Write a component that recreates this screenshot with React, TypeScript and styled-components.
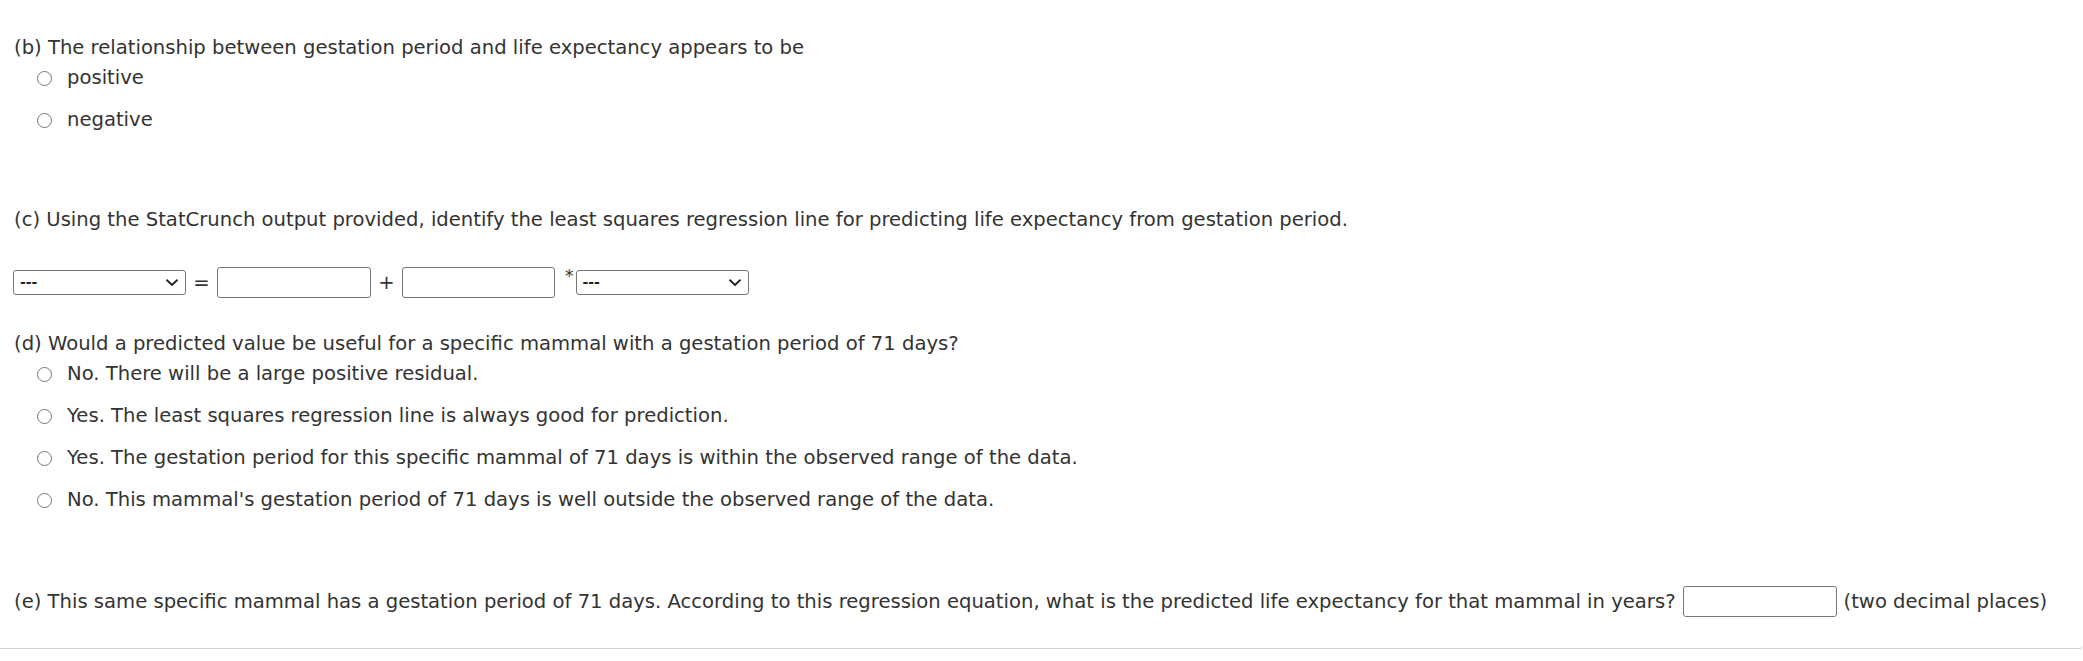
import styled, { createGlobalStyle } from "styled-components";

const GlobalStyle = createGlobalStyle`
  html, body {
    margin: 0;
    padding: 0;
    background: #fff;
  }
  body {
    font-family: "DejaVu Sans", Verdana, sans-serif;
    font-size: 19.6px;
    color: #333;
  }
`;

const Page = styled.div`
  padding: 37px 0 0 14px;
  border-bottom: 1px solid #d4d4d4;
  border-bottom-right-radius: 4px;
  padding-bottom: 31px;
`;

const Section = styled.div<{ $gap?: number }>`
  margin-top: ${(p) => p.$gap ?? 0}px;
`;

const Question = styled.div`
  line-height: 22px;
  height: 22px;
  white-space: nowrap;
`;

const Options = styled.div`
  display: flex;
  flex-direction: column;
  gap: 20px;
  margin-top: 8px;
  padding-left: 23px;
`;

const Option = styled.label`
  display: flex;
  align-items: center;
  gap: 15px;
  height: 22px;
  line-height: 22px;
  white-space: nowrap;
`;

const Radio = styled.span`
  width: 13px;
  height: 13px;
  border: 1px solid #767676;
  border-radius: 50%;
  flex: none;
  margin-top: 1px;
`;

const EqRow = styled.div`
  display: flex;
  align-items: center;
  height: 32px;
  margin-top: 35px;
  margin-left: -1px;
`;

const SelectBox = styled.div`
  width: 173px;
  height: 25px;
  box-sizing: border-box;
  border: 1px solid #767676;
  border-radius: 3px;
  display: flex;
  align-items: center;
  justify-content: space-between;
  padding: 0 6px 0 6px;
  font-size: 14px;
  font-weight: bold;
  color: #222;
`;

const TextBox = styled.div<{ $w?: number }>`
  width: ${(p) => p.$w ?? 154}px;
  height: 31px;
  box-sizing: border-box;
  border: 1px solid #767676;
  border-radius: 3px;
  background: #fff;
  flex: none;
`;

const Op = styled.span`
  width: 31px;
  text-align: center;
`;

const Star = styled.span`
  font-size: 17px;
  align-self: flex-start;
  margin: 2px 2px 0 10px;
  line-height: 16px;
`;

const Inline = styled.div`
  display: flex;
  align-items: center;
  height: 32px;
  white-space: nowrap;
  gap: 7px;
`;

function Chevron() {
  return (
    <svg width="14" height="9" viewBox="0 0 14 9">
      <path d="M1.5 1.8 L7 7 L12.5 1.8" fill="none" stroke="#222" strokeWidth="1.9" />
    </svg>
  );
}

function Select() {
  return (
    <SelectBox>
      <span>---</span>
      <Chevron />
    </SelectBox>
  );
}

function Choices({ items }: { items: string[] }) {
  return (
    <Options>
      {items.map((t) => (
        <Option key={t}>
          <Radio />
          {t}
        </Option>
      ))}
    </Options>
  );
}

export default function App() {
  return (
    <>
      <GlobalStyle />
      <Page>
        <Section>
          <Question>(b) The relationship between gestation period and life expectancy appears to be</Question>
          <Choices items={["positive", "negative"]} />
        </Section>
        <Section $gap={78}>
          <Question>
            (c) Using the StatCrunch output provided, identify the least squares regression line for predicting life
            expectancy from gestation period.
          </Question>
          <EqRow>
            <Select />
            <Op>=</Op>
            <TextBox />
            <Op>+</Op>
            <TextBox $w={153} />
            <Star>*</Star>
            <Select />
          </EqRow>
        </Section>
        <Section $gap={35}>
          <Question>(d) Would a predicted value be useful for a specific mammal with a gestation period of 71 days?</Question>
          <Choices
            items={[
              "No. There will be a large positive residual.",
              "Yes. The least squares regression line is always good for prediction.",
              "Yes. The gestation period for this specific mammal of 71 days is within the observed range of the data.",
              "No. This mammal's gestation period of 71 days is well outside the observed range of the data.",
            ]}
          />
        </Section>
        <Section $gap={74}>
          <Inline>
            <span>
              (e) This same specific mammal has a gestation period of 71 days. According to this regression equation,
              what is the predicted life expectancy for that mammal in years?
            </span>
            <TextBox $w={154} />
            <span>(two decimal places)</span>
          </Inline>
        </Section>
      </Page>
    </>
  );
}
